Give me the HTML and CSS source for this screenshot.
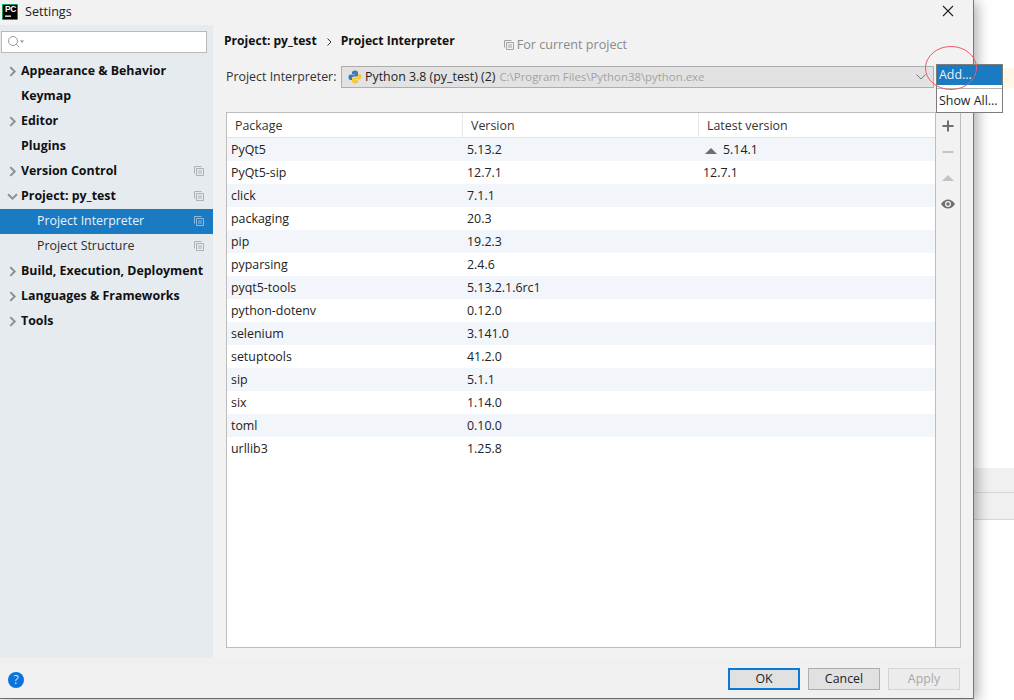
FILE: index.html
```html
<!DOCTYPE html>
<html lang="en">
<head>
<meta charset="utf-8">
<title>Settings</title>
<link rel="stylesheet" href="styles.css">
</head>
<body>
<div class="desktop">
  <div class="dialog">
    <header class="titlebar">
      <svg class="logo" width="16" height="16" viewBox="0 0 16 16"><rect width="16" height="16" fill="#21d789"/><rect x=".7" y=".7" width="14.600" height="14.600" fill="#000"/><rect x="3" y="11.500" width="6" height="1.300" fill="#fff"/></svg>
      <span class="logo-text">PC</span>
      <span class="title">Settings</span>
      <svg class="close" width="12" height="12" viewBox="0 0 12 12"><path d="M1 1l10 10M11 1L1 11" stroke="#222" stroke-width="1.1" fill="none"/></svg>
    </header>
    <div class="content">
      <aside class="sidebar">
        <div class="search">
          <svg width="18" height="14" viewBox="0 0 18 14"><circle cx="6" cy="6" r="4.500" fill="none" stroke="#9a9a9a"/><path d="M9.300 9.300l3 3" stroke="#9a9a9a" fill="none"/><path d="M13 5.500h4l-2 2.200z" fill="#8a8a8a"/></svg>
        </div>
        <nav class="tree">
          <div class="row group"><svg class="arrow" viewBox="0 0 10 10"><path d="M3 1l4 4-4 4" /></svg>Appearance &amp; Behavior</div>
          <div class="row group"><span class="arrow"></span>Keymap</div>
          <div class="row group"><svg class="arrow" viewBox="0 0 10 10"><path d="M3 1l4 4-4 4" /></svg>Editor</div>
          <div class="row group"><span class="arrow"></span>Plugins</div>
          <div class="row group"><svg class="arrow" viewBox="0 0 10 10"><path d="M3 1l4 4-4 4" /></svg>Version Control<svg class="copy" viewBox="0 0 10 10"><path d="M.5 7.500v-7h7M2.500 2.500h7v7h-7zM4 5h4M4 7h4"/></svg></div>
          <div class="row group"><svg class="arrow" viewBox="0 0 10 10"><path d="M1 3l4 4 4-4" /></svg>Project: py_test<svg class="copy" viewBox="0 0 10 10"><path d="M.5 7.500v-7h7M2.500 2.500h7v7h-7zM4 5h4M4 7h4"/></svg></div>
          <div class="row child selected">Project Interpreter<svg class="copy" viewBox="0 0 10 10"><path d="M.5 7.500v-7h7M2.500 2.500h7v7h-7zM4 5h4M4 7h4"/></svg></div>
          <div class="row child">Project Structure<svg class="copy" viewBox="0 0 10 10"><path d="M.5 7.500v-7h7M2.500 2.500h7v7h-7zM4 5h4M4 7h4"/></svg></div>
          <div class="row group"><svg class="arrow" viewBox="0 0 10 10"><path d="M3 1l4 4-4 4" /></svg>Build, Execution, Deployment</div>
          <div class="row group"><svg class="arrow" viewBox="0 0 10 10"><path d="M3 1l4 4-4 4" /></svg>Languages &amp; Frameworks</div>
          <div class="row group"><svg class="arrow" viewBox="0 0 10 10"><path d="M3 1l4 4-4 4" /></svg>Tools</div>
        </nav>
      </aside>
      <main class="main">
        <div class="crumbs">
          <b>Project: py_test</b>
          <svg class="crumb-sep" width="6" height="8" viewBox="0 0 6 8"><path d="M1.500 .5L5 4 1.500 7.500" fill="none" stroke="#333"/></svg>
          <b>Project Interpreter</b>
          <span class="scope"><svg class="copy" viewBox="0 0 10 10"><path d="M.5 7.500v-7h7M2.500 2.500h7v7h-7zM4 5h4M4 7h4"/></svg>For current project</span>
        </div>
        <div class="interp">
          <label class="interp-label">Project Interpreter:</label>
          <div class="combo">
            <svg class="py" width="14" height="14" viewBox="0 0 14 14"><path d="M7 .5C4.600.5 4 1.500 4 2.500V4h3.200v.6H2.600C1.200 4.600.5 5.600.5 7.200s.7 2.700 2 2.700H4V8.300c0-1 .8-1.800 1.800-1.800h2.600c.9 0 1.600-.7 1.600-1.600V2.500C10 1.200 8.800.5 7 .5z" fill="#3a7cb0"/><path d="M7 13.500c2.400 0 3-1 3-2V10H6.800v-.6h4.600c1.400 0 2.100-1 2.100-2.600s-.7-2.700-2-2.700H10v1.600c0 1-.8 1.800-1.800 1.800H5.600C4.700 7.500 4 8.200 4 9.100v2.400c0 1.300 1.200 2 3 2z" fill="#f7c83c"/></svg>
            <span class="py-name">Python 3.8 (py_test) (2)</span>
            <span class="py-path">C:\Program Files\Python38\python.exe</span>
            <svg class="chev" width="10" height="6" viewBox="0 0 10 6"><path d="M.5.500L5 5 9.500.500" fill="none" stroke="#777"/></svg>
          </div>
        </div>
        <div class="panel">
          <div class="table">
            <div class="thead"><span>Package</span><span>Version</span><span>Latest version</span></div>
            <div class="tr"><span>PyQt5</span><span>5.13.2</span><span class="upgrade"><i class="tri"></i>5.14.1</span></div>
            <div class="tr"><span>PyQt5-sip</span><span>12.7.1</span><span>12.7.1</span></div>
            <div class="tr"><span>click</span><span>7.1.1</span><span></span></div>
            <div class="tr"><span>packaging</span><span>20.3</span><span></span></div>
            <div class="tr"><span>pip</span><span>19.2.3</span><span></span></div>
            <div class="tr"><span>pyparsing</span><span>2.4.6</span><span></span></div>
            <div class="tr"><span>pyqt5-tools</span><span>5.13.2.1.6rc1</span><span></span></div>
            <div class="tr"><span>python-dotenv</span><span>0.12.0</span><span></span></div>
            <div class="tr"><span>selenium</span><span>3.141.0</span><span></span></div>
            <div class="tr"><span>setuptools</span><span>41.2.0</span><span></span></div>
            <div class="tr"><span>sip</span><span>5.1.1</span><span></span></div>
            <div class="tr"><span>six</span><span>1.14.0</span><span></span></div>
            <div class="tr"><span>toml</span><span>0.10.0</span><span></span></div>
            <div class="tr"><span>urllib3</span><span>1.25.8</span><span></span></div>
          </div>
          <div class="tools">
            <svg width="12" height="12" viewBox="0 0 12 12"><path d="M6 .5v11M.5 6h11" stroke="#6e6e6e" stroke-width="2" fill="none"/></svg>
            <svg width="12" height="12" viewBox="0 0 12 12"><path d="M.5 6h11" stroke="#c4c4c4" stroke-width="2" fill="none"/></svg>
            <svg width="12" height="12" viewBox="0 0 12 12"><path d="M0 9l6-6 6 6z" fill="#c4c4c4"/></svg>
            <svg width="14" height="12" viewBox="0 0 14 12"><path d="M0 6c2-3 4.300-4.500 7-4.500S12 3 14 6c-2 3-4.300 4.500-7 4.500S2 9 0 6z" fill="#6e6e6e"/><circle cx="7" cy="6" r="3" fill="#f2f2f2"/><circle cx="7" cy="6" r="1.700" fill="#6e6e6e"/></svg>
          </div>
        </div>
      </main>
    </div>
    <footer class="footer">
      <span class="help">?</span>
      <div class="buttons">
        <button class="btn primary">OK</button>
        <button class="btn">Cancel</button>
        <button class="btn disabled">Apply</button>
      </div>
    </footer>
  </div>
  <div class="behind">
    <div class="strip"></div>
    <div class="strip"></div>
  </div>
  <div class="hint"></div>
  <div class="popup">
    <div class="item active">Add...</div>
    <div class="item">Show All...</div>
  </div>
  <svg class="ring" width="54" height="46" viewBox="0 0 54 46"><ellipse cx="27" cy="23" rx="25.500" ry="21.500" fill="none" stroke="#ef5a66"/></svg>
</div>
</body>
</html>
```
FILE: styles.css
```css
* { box-sizing: border-box; }
html, body { margin: 0; padding: 0; background: #fff; }
body { font: 12.4px/1.2 "Open Sans", "Noto Sans", sans-serif; color: #1a1a1a; overflow: hidden; }
.desktop { position: relative; width: 1014px; height: 700px; display: flex; background: #fff; }
.dialog { width: 974px; height: 699px; flex: none; display: flex; flex-direction: column; background: #f2f2f2; border-right: 1px solid #777; border-bottom: 1px solid #6a6a6a; box-shadow: 4px 2px 12px rgba(0,0,0,.3); position: relative; z-index: 1; }
.titlebar { height: 25px; flex: none; display: flex; align-items: center; padding: 0 19px 0 2px; position: relative; background: #f2f2f2; }
.logo { flex: none; align-self: flex-start; margin-top: 4px; }
.logo-text { position: absolute; left: 5px; top: 5px; font-size: 8.500px; line-height: 9px; letter-spacing: -.3px; font-weight: 700; color: #fff; font-family: "Liberation Sans", sans-serif; }
.title { margin-left: 7px; flex: 1; color: #222; font-size: 12.600px; margin-bottom: 2px; }
.close { flex: none; margin-top: -3px; }
.content { flex: 1; display: flex; min-height: 0; }
.sidebar { width: 213px; flex: none; background: #e6ebf0; padding-top: 6px; }
.search { height: 22px; margin: 0 6px 0 1px; border: 1px solid #b9b9b9; background: #fff; display: flex; align-items: center; padding-left: 5px; }
.tree { margin-top: 6px; }
.row { height: 25px; display: flex; align-items: center; position: relative; white-space: nowrap; padding-bottom: 1px; }
.group { font-weight: 700; color: #111; }
.child { padding-left: 37px; color: #2b2b2b; }
.selected { background: #1a7ac2; color: #eaf3fb; }
.arrow { width: 11px; height: 11px; margin: 0 3px 0 7px; flex: none; fill: none; stroke: #8f8f8f; stroke-width: 1.800; }
.copy { width: 10px; height: 10px; fill: none; stroke: #adb1b5; stroke-width: 1; flex: none; }
.row .copy { position: absolute; left: 194px; top: 7px; }
.selected .copy { stroke: #8fbbe0; }
.main { flex: 1; min-width: 0; padding: 7px 12px 10px 13px; display: flex; flex-direction: column; }
.crumbs { height: 19px; display: flex; align-items: center; color: #111; margin-left: -2px; font-size: 12.100px; }
.crumb-sep { margin: 0 9px 0 9px; }
.scope { display: flex; align-items: center; margin: 7px 0 0 49px; color: #8a8a8a; gap: 3px; font-size: 12.600px; }
.scope .copy { stroke: #a0a4a8; }
.interp { display: flex; align-items: center; margin-top: 15px; height: 22px; margin-right: 27px; }
.interp-label { width: 115px; flex: none; color: #333; white-space: nowrap; }
.combo { flex: 1; height: 22px; border: 1px solid #aeaeae; background: #e2e2e2; display: flex; align-items: center; padding: 0 7px 0 6px; white-space: nowrap; }
.py { flex: none; margin-right: 3px; }
.py-name { color: #222; }
.py-path { margin-left: 4px; color: #a2a2a2; font-size: 11.400px; flex: 1; }
.panel { margin-top: 24px; flex: 1; display: flex; border: 1px solid #bdbdbd; min-height: 0; }
.table { flex: 1; min-width: 0; background: #fff; border-right: 1px solid #bdbdbd; }
.thead, .tr { display: grid; grid-template-columns: 235px 236px 1fr; align-items: center; }
.thead { height: 25px; border-bottom: 1px solid #e4e4e4; color: #333; }
.thead span { padding: 1px 0 0 8px; border-left: 1px solid #e8e8e8; height: 24px; line-height: 24px; }
.thead span:first-child { border-left: 0; }
.tr { height: 23px; padding-top: 2px; }
.tr span { padding-left: 4px; color: #222; }
.tr span:nth-child(2) { padding-left: 5px; }
.tr span:nth-child(3) { padding-left: 5px; }
.tr:nth-child(even) { background: #f2f5f9; }
.upgrade { display: flex; align-items: center; }
.tr span.upgrade:nth-child(3) { padding-left: 7px; }
.tri { width: 0; height: 0; margin-right: 6px; border-left: 6px solid transparent; border-right: 6px solid transparent; border-bottom: 6px solid #6e6e6e; }
.tools { width: 24px; flex: none; display: flex; flex-direction: column; align-items: center; padding-top: 7px; gap: 14px; }
.footer { height: 40px; flex: none; display: flex; align-items: center; justify-content: space-between; background: #f0f0f0; padding: 5px 13px 3px 8px; }
.help { width: 16px; height: 16px; margin-top: 2px; border-radius: 50%; background: #0a74da; color: #d5e8fa; font-size: 12px; line-height: 16px; text-align: center; }
.buttons { display: flex; gap: 8px; }
.btn { width: 72px; height: 22px; padding: 0; border: 1px solid #adadad; background: #e1e1e1; font: inherit; color: #222; line-height: 18px; }
.btn.primary { border: 2px solid #0a7ad6; }
.btn.disabled { background: #ececec; border-color: #d4d4d4; color: #a8a8a8; }
.behind { flex: 1; padding-top: 468px; }
.strip { height: 25px; background: #f0f0f0; border-bottom: 1px solid #d6d6d6; }
.strip + .strip { height: 27px; }
.hint { position: absolute; left: 1003px; top: 68px; width: 11px; height: 20px; background: #fff8e6; }
.popup { position: absolute; z-index: 2; left: 936px; top: 64px; width: 67px; height: 49px; background: #fff; border: 1px solid #7c7c7c; }
.item { height: 20px; line-height: 19px; padding-left: 2px; white-space: nowrap; color: #1d1d2d; }
.item.active { background: #1a7ac2; color: #eaf3fb; margin-bottom: 3px; }
.item + .item { height: 24px; line-height: 24px; border-top: 1px solid #b5b5b5; }
.ring { position: absolute; z-index: 3; left: 924px; top: 45px; }
```
